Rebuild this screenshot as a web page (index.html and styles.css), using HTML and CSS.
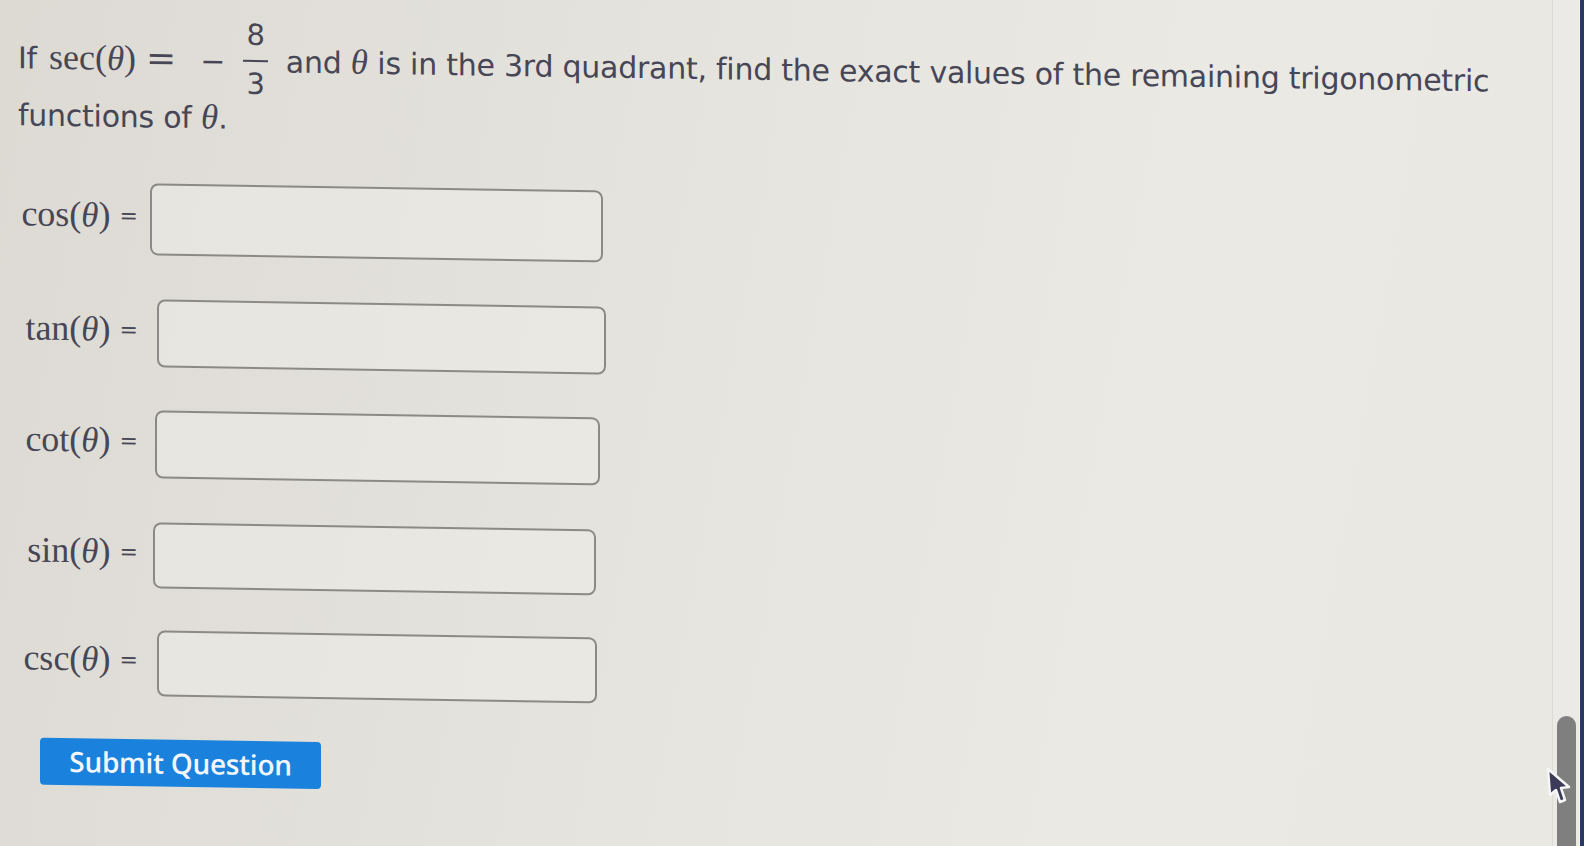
FILE: index.html
```html
<!DOCTYPE html>
<html>
<head>
<meta charset="utf-8">
<link rel="stylesheet" href="styles.css">
</head>
<body>
<div class="page">
  <main class="content">
    <p class="question">
      <span class="t">If</span><span class="math">sec(<i>θ</i>)</span><span class="eq">=</span><span class="minus">−</span><span class="frac"><span class="num">8</span><span class="den">3</span></span><span class="t">and <i class="theta">θ</i> is in the 3rd quadrant, find the exact values of the remaining trigonometric</span><br>
      <span class="t">functions of <i class="theta">θ</i>.</span>
    </p>
    <div class="answers">
      <div class="row r1"><span class="label">cos(<i>θ</i>)<span class="leq">=</span></span><span class="box"></span></div>
      <div class="row r2"><span class="label">tan(<i>θ</i>)<span class="leq">=</span></span><span class="box"></span></div>
      <div class="row r3"><span class="label">cot(<i>θ</i>)<span class="leq">=</span></span><span class="box"></span></div>
      <div class="row r4"><span class="label">sin(<i>θ</i>)<span class="leq">=</span></span><span class="box"></span></div>
      <div class="row r5"><span class="label">csc(<i>θ</i>)<span class="leq">=</span></span><span class="box"></span></div>
    </div>
    <button class="submit">Submit Question</button>
  </main>
  <div class="scroll">
    <div class="track"><div class="thumb"></div></div>
    <div class="edge"></div>
  </div>
  <svg class="cursor" width="30" height="40" viewBox="0 0 30 40">
    <path d="M3 3 L5 29 L11 24 L15 36 L20 34 L16 22 L24 21 Z" fill="#3b3a58" stroke="#f6f6f6" stroke-width="2.5" stroke-linejoin="round"/>
  </svg>
</div>
</body>
</html>
```
FILE: styles.css
```css
html, body {
  margin: 0;
  padding: 0;
}
body {
  width: 1584px;
  height: 846px;
  overflow: hidden;
  background: linear-gradient(100deg, #dcdad3 0%, #e4e2dc 35%, #eae9e4 70%, #e9e8e3 100%);
  color: #474656;
  font-family: "DejaVu Sans", "Open Sans", sans-serif;
}
.page {
  position: relative;
  display: flex;
  height: 846px;
}
.content {
  flex: 1;
  padding: 28px 0 0 18px;
  transform: skewY(0.9deg);
  transform-origin: 0 0;
}
.question {
  margin: 0;
  font-size: 30px;
  line-height: 56px;
  letter-spacing: -0.25px;
  white-space: nowrap;
}
.math {
  font-family: "Liberation Serif", serif;
  font-size: 36px;
  letter-spacing: 0;
  margin-left: 12px;
}
.math i, .label i, .theta {
  font-family: "Liberation Serif", serif;
  font-style: italic;
  font-size: 35px;
  letter-spacing: 0;
}
.eq {
  font-family: "DejaVu Serif", serif;
  font-size: 36px;
  letter-spacing: 0;
  margin-left: 10px;
}
.minus {
  font-family: "DejaVu Sans", sans-serif;
  font-size: 30px;
  letter-spacing: 0;
  margin-left: 24px;
}
.frac {
  display: inline-flex;
  flex-direction: column;
  vertical-align: 27px;
  margin: -16px 18px -12px 18px;
  font-size: 29px;
  line-height: 29px;
  letter-spacing: 0;
}
.num {
  border-bottom: 2px solid #474656;
  padding: 0 3px 10px;
  text-align: center;
}
.den {
  padding-top: 8px;
  text-align: center;
}
.answers {
  display: flex;
  flex-direction: column;
  margin-top: 38px;
}
.row {
  display: flex;
  align-items: center;
}
.r2 { margin-top: 44px; }
.r3 { margin-top: 43px; }
.r4 { margin-top: 44px; }
.r5 { margin-top: 42px; }
.label {
  width: 120px;
  margin-bottom: 8px;
  text-align: right;
  font-family: "Liberation Serif", serif;
  font-size: 36px;
  white-space: nowrap;
}
.leq {
  font-family: "DejaVu Sans", sans-serif;
  font-size: 22px;
  margin-left: 9px;
  vertical-align: 4px;
}
.box {
  display: block;
  height: 68px;
  width: 453px;
  margin-left: 12px;
  border: 2px solid #8b8a86;
  border-radius: 8px;
  background: rgba(238, 237, 232, 0.5);
  box-sizing: border-box;
}
.r1 .box { height: 72px; }
.r2 .box { margin-left: 19px; width: 449px; }
.r3 .box { margin-left: 17px; width: 445px; }
.r4 .box { margin-left: 15px; width: 443px; height: 66px; }
.r5 .box { margin-left: 19px; width: 440px; height: 66px; }
.submit {
  display: block;
  margin: 43px 0 0 22px;
  width: 281px;
  height: 47px;
  background: #1a82dc;
  color: #f3f6fb;
  border: none;
  border-radius: 4px;
  font-family: "Open Sans", "DejaVu Sans", sans-serif;
  font-weight: 600;
  font-size: 28px;
  letter-spacing: -0.3px;
  padding: 0 0 2px;
}
.scroll {
  display: flex;
  width: 32px;
}
.track {
  width: 26px;
  background: #ebeae6;
  border-left: 1px solid #dcdbd6;
  position: relative;
}
.thumb {
  position: absolute;
  left: 4px;
  top: 716px;
  width: 19px;
  height: 140px;
  background: #7f7f7f;
  border-radius: 10px;
}
.edge {
  width: 5px;
  background: linear-gradient(90deg, #f3f3f1 0 30%, #2a3868 30%);
}
.cursor {
  position: absolute;
  left: 1545px;
  top: 766px;
}
```
